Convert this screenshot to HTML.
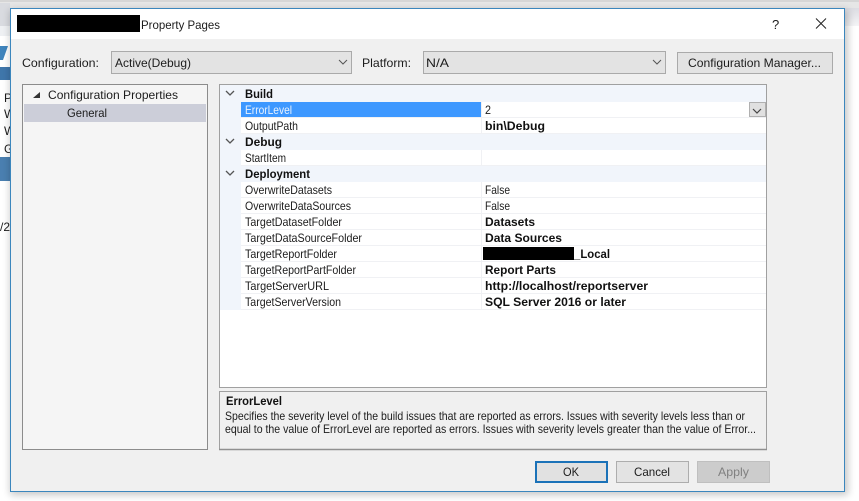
<!DOCTYPE html>
<html><head><meta charset="utf-8"><style>
html,body{margin:0;padding:0;background:#fff;width:859px;height:501px;overflow:hidden}
svg{display:block}
text{font-family:"Liberation Sans",sans-serif;font-size:12px;fill:#1c1c1c;white-space:pre}
.b{font-weight:bold;fill:#111}
</style></head><body>
<svg width="859" height="501" viewBox="0 0 859 501" xmlns="http://www.w3.org/2000/svg">
<defs>
<linearGradient id="rt" x1="0" y1="0" x2="0" y2="1"><stop offset="0" stop-color="#dcdce2"/><stop offset="1" stop-color="#f4f4f6"/></linearGradient>
<filter id="sh" x="-5%" y="-5%" width="110%" height="110%"><feGaussianBlur stdDeviation="4"/></filter>
</defs>
<rect width="859" height="501" fill="#fff"/>
<rect y="0" width="859" height="8" fill="#e6e6e6"/>
<rect y="0" width="859" height="2" fill="#d6d6d6"/>
<rect x="0" y="3" width="10" height="23" fill="#d9dbe0"/>
<rect x="0" y="26" width="10" height="10" fill="#eef0f3"/>
<rect x="845" y="8" width="14" height="18" fill="url(#rt)"/>
<rect x="0" y="67" width="10" height="13" fill="#3f76aa"/>
<rect x="0" y="157" width="10" height="24" fill="#4a7fb0"/>
<path d="M0 46 L5 46 L8 46 L3 60 L0 60Z" fill="#3f84bd"/>
<text x="4" y="102" style="font-size:12px">P</text>
<text x="4" y="118">W</text>
<text x="4" y="135">W</text>
<text x="4" y="153">G</text>
<text x="0" y="231">/2</text>
<rect x="10" y="10" width="838" height="485" fill="#000" opacity=".22" filter="url(#sh)"/>

<!-- dialog -->
<rect x="10.5" y="8.5" width="834" height="483" fill="#f0f0f0" stroke="#3b86bd"/>
<rect x="11" y="9" width="833" height="30" fill="#fff"/>
<rect x="17" y="15" width="123" height="17" fill="#000"/>
<text x="141" y="29" textLength="79" lengthAdjust="spacingAndGlyphs">Property Pages</text>
<text x="772" y="29" style="font-size:13px">?</text>
<path d="M816 18.5 L826 28.5 M826 18.5 L816 28.5" stroke="#222" stroke-width="1" fill="none"/>

<!-- top row -->
<text x="22" y="67" textLength="77" lengthAdjust="spacingAndGlyphs">Configuration:</text>
<rect x="111.500" y="51.500" width="240" height="22" fill="#e3e3e3" stroke="#aaa"/>
<text x="115" y="67" textLength="76" lengthAdjust="spacingAndGlyphs">Active(Debug)</text>
<path d="M339 60 L343 64 L347 60" stroke="#555" fill="none"/>
<text x="362" y="67" textLength="49" lengthAdjust="spacingAndGlyphs">Platform:</text>
<rect x="423.500" y="51.500" width="242" height="22" fill="#e3e3e3" stroke="#aaa"/>
<text x="426" y="67" textLength="23" lengthAdjust="spacingAndGlyphs">N/A</text>
<path d="M653 60 L657 64 L661 60" stroke="#555" fill="none"/>
<rect x="677.500" y="52.500" width="155" height="21" fill="#e3e3e3" stroke="#aaa"/>
<text x="688" y="67" textLength="133" lengthAdjust="spacingAndGlyphs">Configuration Manager...</text>

<!-- tree -->
<rect x="22.500" y="84.500" width="185" height="365" fill="#f5f5f5" stroke="#8c8c8c"/>
<rect x="24" y="104" width="182" height="18" fill="#ccced9"/>
<path d="M33 98 L40 98 L40 92Z" fill="#333"/>
<text x="48" y="99" textLength="130" lengthAdjust="spacingAndGlyphs">Configuration Properties</text>
<text x="67" y="117" textLength="40" lengthAdjust="spacingAndGlyphs">General</text>

<!-- grid -->
<rect x="219.500" y="84.500" width="547" height="303" fill="#fff" stroke="#a0a0a0"/>
<rect x="220" y="85" width="546" height="17" fill="#f1f5fb"/>
<rect x="220" y="134" width="546" height="16" fill="#f1f5fb"/>
<rect x="220" y="166" width="546" height="16" fill="#f1f5fb"/>
<rect x="220" y="102" width="21" height="208" fill="#f1f5fb"/>
<rect x="241" y="102" width="240" height="15" fill="#3d98ff"/>
<g stroke="#f0f1f4" fill="none">
<path d="M241 117.500H766M241 133.500H766M241 165.500H766M241 197.500H766M241 213.500H766M241 229.500H766M241 245.500H766M241 261.500H766M241 277.500H766M241 293.500H766M241 309.500H766"/>
<path d="M481.500 102V134M481.500 150V166M481.500 182V310"/>
</g>
<g stroke="#555" stroke-width="1.300" fill="none">
<path d="M226 91 L230 95 L234 91"/><path d="M226 139 L230 143 L234 139"/><path d="M226 171 L230 175 L234 171"/>
</g>
<rect x="749.500" y="102.500" width="16" height="14" fill="#e0e0e0" stroke="#b0b0b0"/>
<path d="M753 109 L757 113 L761 109" stroke="#444" stroke-width="1.200" fill="none"/>

<text class="b" x="245" y="98" textLength="28" lengthAdjust="spacingAndGlyphs">Build</text>
<text x="245" y="114" textLength="47" lengthAdjust="spacingAndGlyphs" style="fill:#e8f2ff">ErrorLevel</text>
<text x="245" y="130" textLength="53" lengthAdjust="spacingAndGlyphs">OutputPath</text>
<text class="b" x="245" y="146" textLength="37" lengthAdjust="spacingAndGlyphs">Debug</text>
<text x="245" y="162" textLength="41" lengthAdjust="spacingAndGlyphs">StartItem</text>
<text class="b" x="245" y="178" textLength="65" lengthAdjust="spacingAndGlyphs">Deployment</text>
<text x="245" y="194" textLength="87" lengthAdjust="spacingAndGlyphs">OverwriteDatasets</text>
<text x="245" y="210" textLength="106" lengthAdjust="spacingAndGlyphs">OverwriteDataSources</text>
<text x="245" y="226" textLength="97" lengthAdjust="spacingAndGlyphs">TargetDatasetFolder</text>
<text x="245" y="242" textLength="117" lengthAdjust="spacingAndGlyphs">TargetDataSourceFolder</text>
<text x="245" y="258" textLength="92" lengthAdjust="spacingAndGlyphs">TargetReportFolder</text>
<text x="245" y="274" textLength="111" lengthAdjust="spacingAndGlyphs">TargetReportPartFolder</text>
<text x="245" y="290" textLength="84" lengthAdjust="spacingAndGlyphs">TargetServerURL</text>
<text x="245" y="306" textLength="96" lengthAdjust="spacingAndGlyphs">TargetServerVersion</text>

<text x="485" y="114" textLength="6" lengthAdjust="spacingAndGlyphs">2</text>
<text class="b" x="485" y="130" textLength="60" lengthAdjust="spacingAndGlyphs">bin\Debug</text>
<text x="485" y="194" textLength="25" lengthAdjust="spacingAndGlyphs">False</text>
<text x="485" y="210" textLength="25" lengthAdjust="spacingAndGlyphs">False</text>
<text class="b" x="485" y="226" textLength="50" lengthAdjust="spacingAndGlyphs">Datasets</text>
<text class="b" x="485" y="242" textLength="77" lengthAdjust="spacingAndGlyphs">Data Sources</text>
<rect x="483" y="247" width="91" height="13" fill="#000"/>
<text class="b" x="574" y="258" textLength="36" lengthAdjust="spacingAndGlyphs">_Local</text>
<text class="b" x="485" y="274" textLength="71" lengthAdjust="spacingAndGlyphs">Report Parts</text>
<text class="b" x="485" y="290" textLength="163" lengthAdjust="spacingAndGlyphs">http://localhost/reportserver</text>
<text class="b" x="485" y="306" textLength="141" lengthAdjust="spacingAndGlyphs">SQL Server 2016 or later</text>

<!-- description -->
<rect x="219.500" y="391.500" width="547" height="58" fill="#f0f0f0" stroke="#a0a0a0"/>
<path d="M219 449.500H767" stroke="#909090" stroke-width="1.500"/>
<text class="b" x="226" y="405" textLength="56" lengthAdjust="spacingAndGlyphs">ErrorLevel</text>
<text x="225" y="420" textLength="520" lengthAdjust="spacingAndGlyphs">Specifies the severity level of the build issues that are reported as errors. Issues with severity levels less than or</text>
<text x="225" y="433" textLength="531" lengthAdjust="spacingAndGlyphs">equal to the value of ErrorLevel are reported as errors. Issues with severity levels greater than the value of Error...</text>

<!-- buttons -->
<rect x="536" y="462" width="71" height="20" fill="#e1e1e1" stroke="#1b72b8" stroke-width="2"/>
<text x="563" y="476" textLength="16" lengthAdjust="spacingAndGlyphs">OK</text>
<rect x="616.500" y="461.500" width="72" height="21" fill="#e3e3e3" stroke="#adadad"/>
<text x="634" y="476" textLength="36" lengthAdjust="spacingAndGlyphs">Cancel</text>
<rect x="697.500" y="461.500" width="72" height="21" fill="#cccccc" stroke="#bfbfbf"/>
<text x="718" y="476" textLength="31" lengthAdjust="spacingAndGlyphs" style="fill:#808080">Apply</text>
</svg>
</body></html>
